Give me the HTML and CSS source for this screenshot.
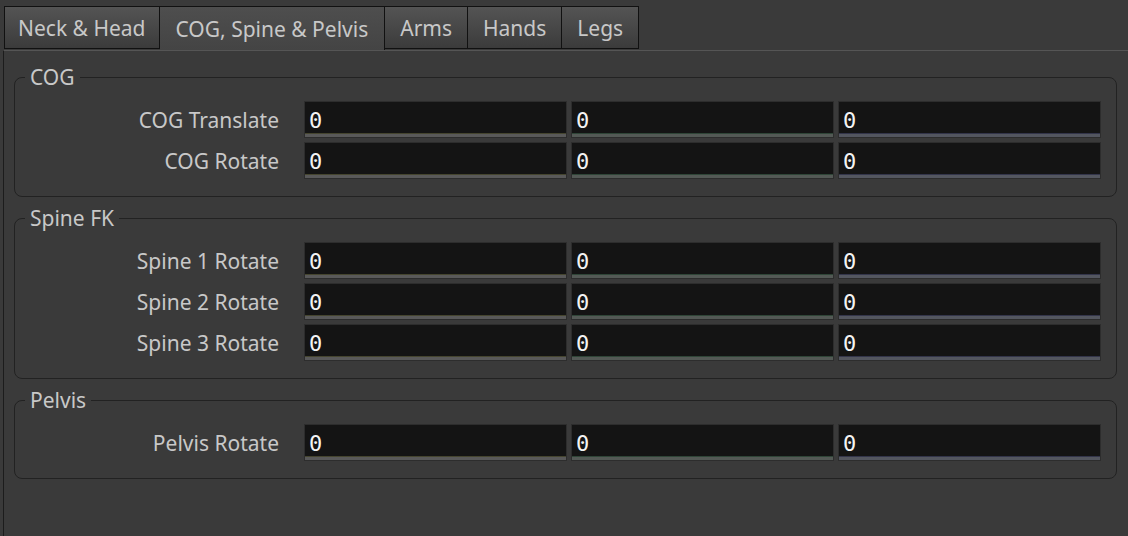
FILE: index.html
```html
<!DOCTYPE html>
<html lang="en">
  <head>
    <meta charset="UTF-8" />
    <title>Rig Controls</title>
    <link rel="stylesheet" href="styles.css">
  </head>
  <body>
    <div class="tabbar">
      <div class="tab">Neck &amp; Head</div>
      <div class="tab active">COG, Spine &amp; Pelvis</div>
      <div class="tab">Arms</div>
      <div class="tab">Hands</div>
      <div class="tab">Legs</div>
    </div>

    <div class="pane">
      <!-- COG -->
      <fieldset class="group">
        <legend>COG</legend>
        <div class="rows">
          <label>COG Translate</label>
          <input class="fx" type="text" value="0" />
          <input class="fy" type="text" value="0" />
          <input class="fz" type="text" value="0" />
          <label>COG Rotate</label>
          <input class="fx" type="text" value="0" />
          <input class="fy" type="text" value="0" />
          <input class="fz" type="text" value="0" />
        </div>
      </fieldset>

      <!-- Spine -->
      <fieldset class="group">
        <legend>Spine FK</legend>
        <div class="rows">
          <label>Spine 1 Rotate</label>
          <input class="fx" type="text" value="0" />
          <input class="fy" type="text" value="0" />
          <input class="fz" type="text" value="0" />
          <label>Spine 2 Rotate</label>
          <input class="fx" type="text" value="0" />
          <input class="fy" type="text" value="0" />
          <input class="fz" type="text" value="0" />
          <label>Spine 3 Rotate</label>
          <input class="fx" type="text" value="0" />
          <input class="fy" type="text" value="0" />
          <input class="fz" type="text" value="0" />
        </div>
      </fieldset>

      <!-- Pelvis -->
      <fieldset class="group">
        <legend>Pelvis</legend>
        <div class="rows">
          <label>Pelvis Rotate</label>
          <input class="fx" type="text" value="0" />
          <input class="fy" type="text" value="0" />
          <input class="fz" type="text" value="0" />
        </div>
      </fieldset>
    </div>
  </body>
</html>
```

FILE: styles.css
```css
/* General styling */
html,
body {
  height: 100%;
}

body {
  margin: 0;
  background-color: #3a3a3a;
  color: #c8c8c8;
  font-family: "Noto Sans", sans-serif;
  font-size: 21px;
  display: flex;
  flex-direction: column;
  overflow: hidden;
}

/* Tabs */
.tabbar {
  display: flex;
  padding: 6px 0 0 4px;
}

.tab {
  height: 43px;
  box-sizing: border-box;
  padding: 0 15px;
  display: flex;
  align-items: center;
  border: 1px solid #111;
  border-left: none;
  background: linear-gradient(#545454, #3b3b3b);
}

.tab:first-child {
  padding: 0 13px;
  border-left: 1px solid #111;
}

.tab.active {
  padding: 0 16px;
  background: linear-gradient(#4e4e4e, #444);
  border-bottom: none;
  height: 44px;
}

/* Pane */
.pane {
  flex: 1;
  margin-left: 3px;
  border-left: 1px solid #1c1c1c;
  border-top: 1px solid #555;
  padding: 15px 11px 0 10px;
}

.group {
  margin: 0 0 10px;
  padding: 0 15px 17px 0;
  border: 1px solid #222;
  border-radius: 8px;
}

.group legend {
  margin-left: 10px;
  padding: 0 5px;
  line-height: 22px;
}

.rows {
  display: grid;
  grid-template-columns: 285px repeat(3, 1fr);
  column-gap: 4px;
  row-gap: 4px;
  padding-top: 13px;
  align-items: center;
}

.rows label {
  text-align: right;
  padding-right: 21px;
}

.rows input {
  height: 37px;
  box-sizing: border-box;
  width: 100%;
  min-width: 0;
  margin: 0;
  padding: 1px 4px 0;
  border: 1px solid #2d2d2d;
  background-color: #141414;
  color: #f4f4f4;
  font-family: "DejaVu Sans Mono", monospace;
  font-size: 22px;
  outline: none;
}

.rows input.fx {
  box-shadow: inset 0 -3px 0 #595959, inset 0 -4px 0 #45452f;
}

.rows input.fy {
  box-shadow: inset 0 -3px 0 #535955, inset 0 -4px 0 #2f4537;
}

.rows input.fz {
  box-shadow: inset 0 -3px 0 #53565f, inset 0 -4px 0 #33354a;
}
```
